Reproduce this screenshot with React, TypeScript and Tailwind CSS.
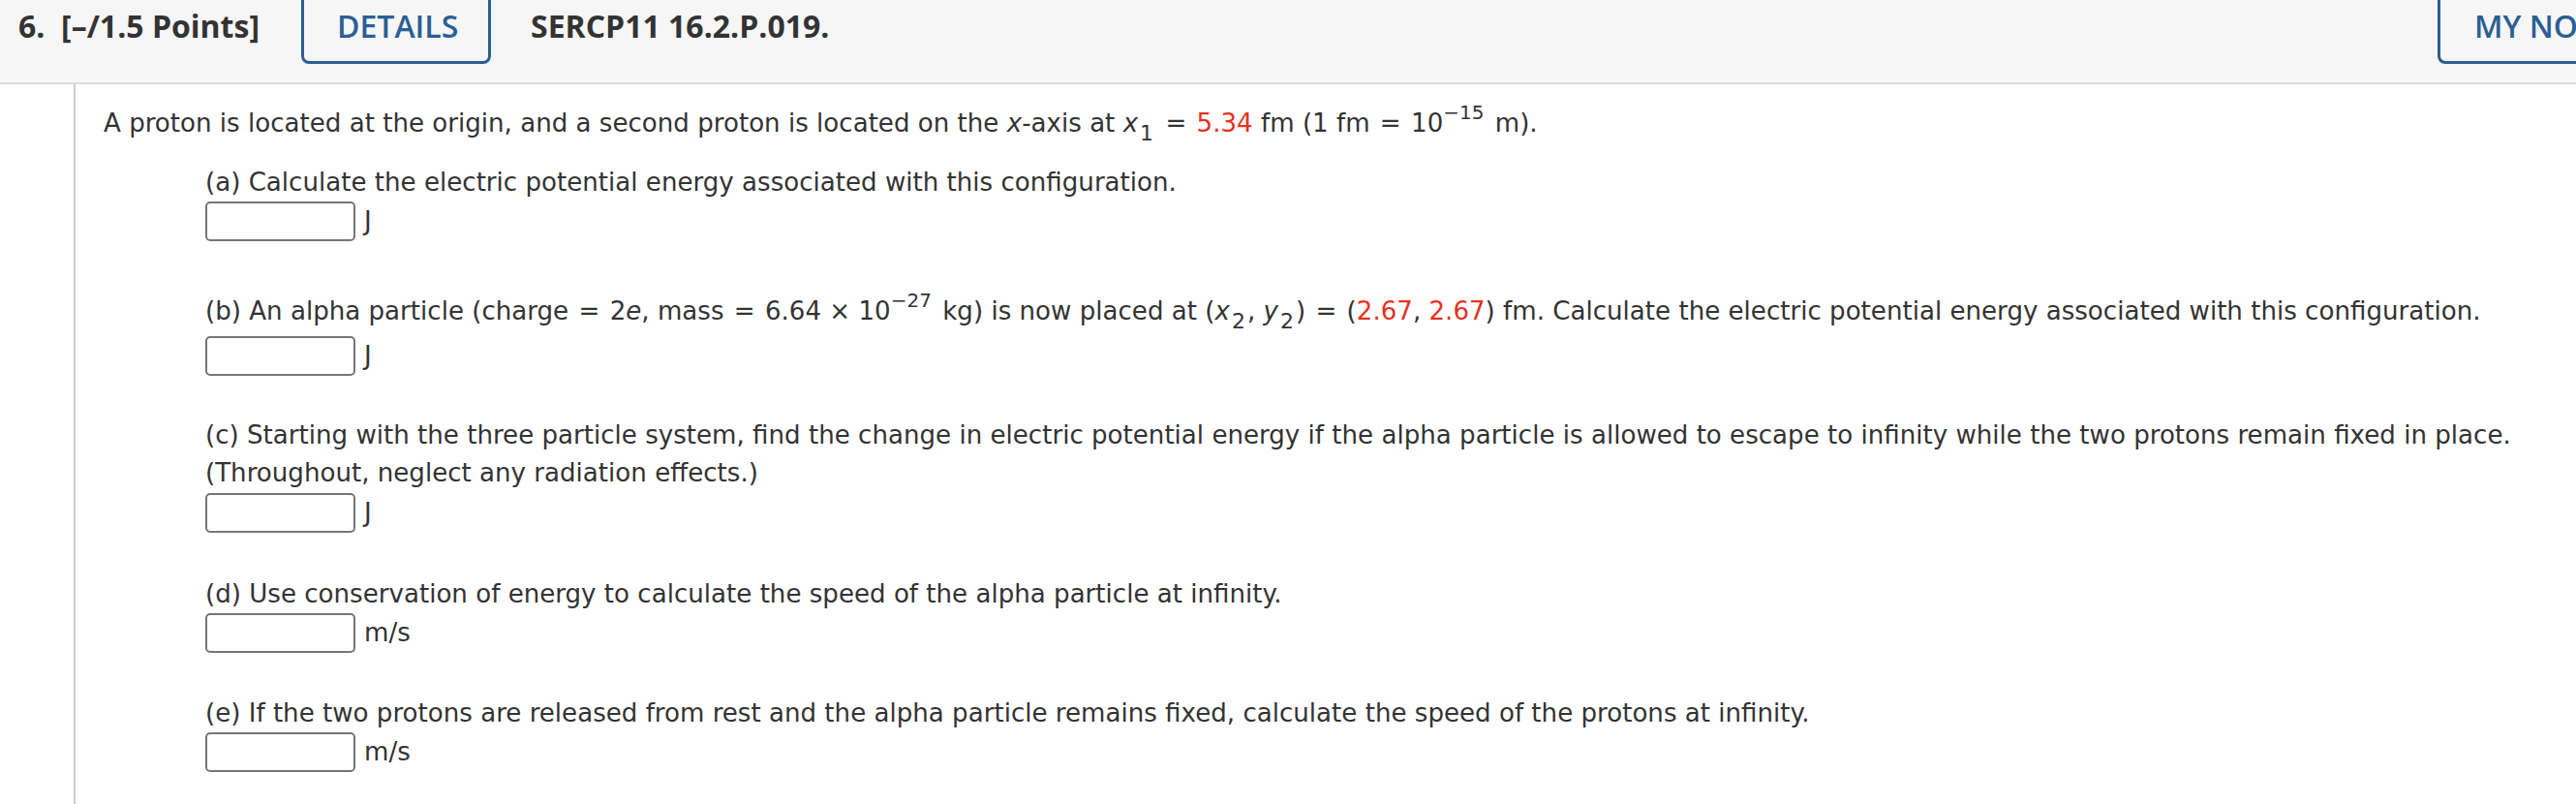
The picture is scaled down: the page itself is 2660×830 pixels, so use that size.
import React from 'react'

const red = 'text-[#e5321f]'

function Sub({ children }: { children: React.ReactNode }) {
  return <span className="relative top-[9px] px-[2px] text-[22px] leading-[0] not-italic">{children}</span>
}

function Sup({ children }: { children: React.ReactNode }) {
  return <span className="relative top-[-13px] pr-[3px] text-[20px] leading-[0]">{children}</span>
}

function Op({ children }: { children: React.ReactNode }) {
  return <span className="mx-[2px]">{children}</span>
}

function Answer({ unit, className = '' }: { unit: string; className?: string }) {
  return (
    <div className={`flex items-center gap-[9px] ${className}`}>
      <div className="h-[41px] w-[155px] rounded-[5px] border-2 border-[#767676] bg-white" />
      <span>{unit}</span>
    </div>
  )
}

export default function App() {
  return (
    <div className="h-[830px] w-[2660px] overflow-hidden bg-white">
      {/* Question header */}
      <header className="flex h-[87px] items-start overflow-hidden border-b-2 border-[#dddddd] bg-[#f6f6f6] font-['Open_Sans',sans-serif] text-[32px] leading-[32px]">
        <div className="w-[311px] shrink-0 whitespace-nowrap pl-[19px] pt-[11px] font-bold text-[#333333]">
          6.&nbsp; [–/1.5 Points]
        </div>
        <div className="-mt-[10px] h-[76px] w-[196px] shrink-0 rounded-b-[8px] border-[3px] border-[#2b5f94] pl-[34px] pt-[18px] font-semibold text-[#2b5f94]">
          DETAILS
        </div>
        <div className="ml-[41px] whitespace-nowrap pt-[11px] font-bold text-[#333333]">SERCP11 16.2.P.019.</div>
        <div className="flex-1" />
        <div className="-mt-[10px] h-[76px] w-[143px] shrink-0 overflow-hidden whitespace-nowrap rounded-bl-[8px] border-[3px] border-r-0 border-[#2b5f94] pl-[35px] pt-[18px] font-semibold text-[#2b5f94]">
          MY NOTES
        </div>
      </header>

      {/* Question body */}
      <div className="ml-[76px] h-[743px] border-l-2 border-[#cccccc] pl-[29px] font-['DejaVu_Sans',Verdana,sans-serif] text-[26.1px] leading-[39px] whitespace-nowrap text-[#333333]">
        <p className="pt-[21px]">
          A proton is located at the origin, and a second proton is located on the <i>x</i>-axis at{' '}
          <i>x</i>
          <Sub>1</Sub> <Op>=</Op> <span className={red}>5.34</span> fm (1 fm <Op>=</Op> 10<Sup>−15</Sup> m).
        </p>

        <div className="pl-[105px]">
          <p className="mt-[22px]">(a) Calculate the electric potential energy associated with this configuration.</p>
          <Answer unit="J" />

          <p className="mt-[53px]">
            (b) An alpha particle (charge <Op>=</Op> 2<i>e</i>, mass <Op>=</Op> 6.64 × 10<Sup>−27</Sup> kg) is now
            placed at (<i>x</i>
            <Sub>2</Sub>, <i>y</i>
            <Sub>2</Sub>) <Op>=</Op> (<span className={red}>2.67</span>, <span className={red}>2.67</span>) fm.
            Calculate the electric potential energy associated with this configuration.
          </p>
          <Answer unit="J" className="mt-[6px]" />

          <p className="mt-[42px]">
            (c) Starting with the three particle system, find the change in electric potential energy if the alpha
            particle is allowed to escape to infinity while the two protons remain fixed in place.
            <br />
            (Throughout, neglect any radiation effects.)
          </p>
          <Answer unit="J" className="mt-[1px]" />

          <p className="mt-[44px]">(d) Use conservation of energy to calculate the speed of the alpha particle at infinity.</p>
          <Answer unit="m/s" />

          <p className="mt-[43px]">
            (e) If the two protons are released from rest and the alpha particle remains fixed, calculate the speed of
            the protons at infinity.
          </p>
          <Answer unit="m/s" />
        </div>
      </div>
    </div>
  )
}
